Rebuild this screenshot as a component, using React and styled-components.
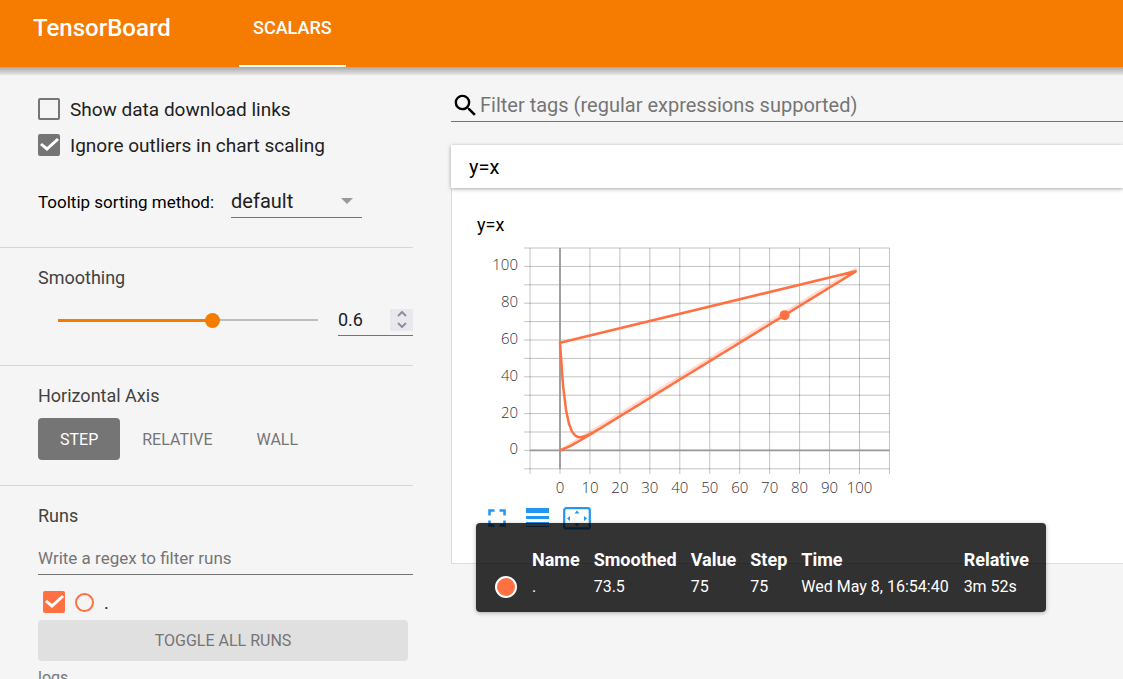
import React, { useState } from 'react';
import styled, { createGlobalStyle } from 'styled-components';
import { MdSearch, MdFullscreen } from 'react-icons/md';

const ORANGE = '#f57c00';
const RUN_COLOR = '#ff7043';

// the run was written twice into the same log dir, so steps go 0-99 and then restart
const points = [...Array(200)].map((_, i) => ({ step: i % 100, value: i % 100 }));

const smooth = (data, weight) => {
  let last = 0;
  return data.map((p, i) => {
    last = last * weight + (1 - weight) * p.value;
    return { step: p.step, value: last / (1 - Math.pow(weight, i + 1)) };
  });
}

const scaleX = (v) => 83 + v * 2.995;
const scaleY = (v) => 207.4 - v * 1.84;
const toPath = (data) => data.map((p) => `${scaleX(p.step).toFixed(2)},${scaleY(p.value).toFixed(2)}`).join(' ');

const range = (from, to, step) => {
  const result = [];
  for (let v = from; v <= to; v += step) result.push(v);
  return result;
}

const LineChart = ({ smoothing }) => {
  const xTicks = range(-10, 110, 10);
  const yTicks = range(-10, 110, 10);
  const hovered = { step: 75, value: 73.5 };

  return (<Chart viewBox="0 0 424 260" role="img" aria-label="y=x">
    <g stroke="#000" strokeOpacity="0.24">
      {xTicks.map((v) => <line key={v} x1={scaleX(v)} x2={scaleX(v)} y1={scaleY(110)} y2="231" />)}
      {yTicks.map((v) => <line key={v} y1={scaleY(v)} y2={scaleY(v)} x1="47" x2={scaleX(110)} />)}
    </g>
    <g stroke="#999" strokeWidth="1.8">
      <line x1={scaleX(0)} x2={scaleX(0)} y1={scaleY(110)} y2={scaleY(-10)} />
      <line x1={scaleX(-10)} x2={scaleX(110)} y1={scaleY(0)} y2={scaleY(0)} />
    </g>
    {range(0, 100, 10).map((v) => <text key={v} x={scaleX(v)} y="250" textAnchor="middle">{v}</text>)}
    {range(0, 100, 20).map((v) => <text key={v} x="41" y={scaleY(v) + 4} textAnchor="end">{v}</text>)}
    <g fill="none" stroke={RUN_COLOR} strokeWidth="2.5">
      <polyline points={toPath(points.slice(0, 100))} strokeOpacity="0.25" />
      <polyline points={toPath(smooth(points, smoothing))} />
    </g>
    <circle cx={scaleX(hovered.step)} cy={scaleY(hovered.value)} r="5" fill={RUN_COLOR} />
  </Chart>)
}

const LinesIcon = () => (
  <svg width="24" height="24" viewBox="0 0 24 24" fill="currentColor" aria-hidden="true">
    <path d="M1 2h23v5H1zM1 10h23v3H1zM1 16h23v2H1zM1 20h23v1H1z" />
  </svg>
)

const FitIcon = () => (
  <svg width="28" height="24" viewBox="0 0 28 24" aria-hidden="true">
    <rect x="1.2" y="2.2" width="25.6" height="20.2" rx="2" fill="none" stroke="currentColor" strokeWidth="2.2" />
    <path fill="currentColor" d="M14 4.5l2.5 3h-5zM14 20.5l2.5-3h-5zM4 12.5l3-2.5v5zM24 12.5l-3-2.5v5z" />
  </svg>
)

export default () => {

  const [smoothing, setSmoothing] = useState(0.6);
  const [axis, setAxis] = useState('step');
  const changeSmoothing = (value) => setSmoothing(Math.min(0.999, Math.max(0, Number(value))));

  return (<Shell>
    <Global />
    <Header>
      <Title>TensorBoard</Title>
      <Nav><Tab href="#scalars">SCALARS</Tab></Nav>
    </Header>
    <Body>
      <Sidebar>
        <Section $pad="24px 0 29px 38px">
          <CheckLabel><Checkbox type="checkbox" />Show data download links</CheckLabel>
          <CheckLabel><Checkbox type="checkbox" defaultChecked />Ignore outliers in chart scaling</CheckLabel>
          <SortRow>
            <label htmlFor="sorting">Tooltip sorting method:</label>
            <SelectBox>
              <select id="sorting" defaultValue="default">
                <option>default</option>
                <option>descending</option>
                <option>ascending</option>
                <option>nearest</option>
              </select>
              <svg width="12" height="6" viewBox="0 0 12 6"><path d="M0 0h12L6 6z" fill="#999" /></svg>
            </SelectBox>
          </SortRow>
        </Section>
        <Section $pad="18px 0 22px 38px">
          <Heading id="smoothing">Smoothing</Heading>
          <SmoothingRow>
            <Slider
              type="range"
              min="0"
              max="1"
              step="0.001"
              aria-labelledby="smoothing"
              value={smoothing}
              onChange={(e) => changeSmoothing(e.target.value)}
              style={{ '--fill': `${smoothing * 100}%` }}
            />
            <NumberBox>
              <input
                type="number"
                step="0.1"
                aria-labelledby="smoothing"
                value={smoothing}
                onChange={(e) => changeSmoothing(e.target.value)}
              />
              <Spinner>
                <button aria-label="Increase" onClick={() => changeSmoothing(smoothing + 0.1)}>
                  <svg width="10" height="6" viewBox="0 0 10 6"><path d="M1 5l4-4 4 4" /></svg>
                </button>
                <button aria-label="Decrease" onClick={() => changeSmoothing(smoothing - 0.1)}>
                  <svg width="10" height="6" viewBox="0 0 10 6"><path d="M1 1l4 4 4-4" /></svg>
                </button>
              </Spinner>
            </NumberBox>
          </SmoothingRow>
        </Section>
        <Section $pad="18px 0 25px 38px">
          <Heading>Horizontal Axis</Heading>
          <AxisRow>
            {['step', 'relative', 'wall'].map((name) => (
              <AxisButton key={name} $active={axis === name} onClick={() => setAxis(name)}>
                {name.toUpperCase()}
              </AxisButton>
            ))}
          </AxisRow>
        </Section>
        <Section $pad="18px 0 0 38px" $last>
          <Heading id="runs">Runs</Heading>
          <RunFilter aria-labelledby="runs" placeholder="Write a regex to filter runs" />
          <RunRow>
            <Checkbox type="checkbox" id="run" defaultChecked $color={RUN_COLOR} />
            <RunDot />
            <label htmlFor="run">.</label>
          </RunRow>
          <ToggleButton>TOGGLE ALL RUNS</ToggleButton>
          <LogDir>logs</LogDir>
        </Section>
      </Sidebar>
      <Main>
        <Search>
          <MdSearch size={29} />
          <input aria-label="Filter tags" placeholder="Filter tags (regular expressions supported)" />
        </Search>
        <CategoryButton>y=x</CategoryButton>
        <Card>
          <CardTitle>y=x</CardTitle>
          <LineChart smoothing={smoothing} />
          <Tools>
            <button aria-label="Toggle full size"><MdFullscreen size={30} /></button>
            <button aria-label="Toggle log scale"><LinesIcon /></button>
            <button aria-label="Fit domain to data"><FitIcon /></button>
          </Tools>
          <Tooltip>
            <table>
              <thead>
                <tr><th /><th>Name</th><th>Smoothed</th><th>Value</th><th>Step</th><th>Time</th><th>Relative</th></tr>
              </thead>
              <tbody>
                <tr>
                  <td><Swatch /></td>
                  <td>.</td>
                  <td>73.5</td>
                  <td>75</td>
                  <td>75</td>
                  <td>Wed May 8, 16:54:40</td>
                  <td>3m 52s</td>
                </tr>
              </tbody>
            </table>
          </Tooltip>
        </Card>
      </Main>
    </Body>
  </Shell>)
}

const Global = createGlobalStyle`
  * {
    box-sizing: border-box;
  }
  body {
    margin: 0;
    background: #f5f5f5;
    color: #212121;
    font-family: Roboto, sans-serif;
    font-size: 18px;
  }
  button, input, select {
    margin: 0;
    padding: 0;
    border: none;
    outline: none;
    background: none;
    color: inherit;
    font: inherit;
  }
  button, select {
    cursor: pointer;
  }
  input::placeholder {
    color: #757575;
    opacity: 1;
  }
`;

const Shell = styled.div`
  display: flex;
  flex-direction: column;
  height: 100vh;
  overflow: hidden;
`;

const Header = styled.header`
  display: flex;
  flex: none;
  height: 67px;
  padding-left: 33px;
  background: ${ORANGE};
  color: #fff;
`;

const Title = styled.h1`
  width: 206px;
  margin: 0;
  font-size: 24px;
  font-weight: 500;
  line-height: 56px;
`;

const Nav = styled.nav`
  display: flex;
`;

const Tab = styled.a`
  padding: 0 14px;
  border-bottom: 2px solid #fff;
  color: #fff;
  font-weight: 500;
  line-height: 56px;
  text-decoration: none;
`;

const Body = styled.div`
  display: flex;
  flex: 1;
  gap: 38px;
  min-height: 0;
  background: linear-gradient(#a8a8a8, #e6e6e6) top / 100% 8px no-repeat;
`;

const Sidebar = styled.aside`
  flex: none;
  width: 413px;
`;

const Section = styled.section`
  padding: ${(props) => props.$pad};
  border-bottom: ${(props) => props.$last ? 'none' : '1px solid #d6d6d6'};
`;

const Heading = styled.h3`
  margin: 0;
  color: #424242;
  font-size: 18px;
  font-weight: 400;
  line-height: 24px;
`;

const CheckLabel = styled.label`
  display: flex;
  align-items: center;
  gap: 10px;
  height: 36px;
  font-size: 19px;
`;

const Checkbox = styled.input`
  appearance: none;
  flex: none;
  width: 22px;
  height: 22px;
  border: 2px solid #757575;
  border-radius: 2px;

  &:checked {
    border: none;
    background: ${(props) => props.$color || '#757575'};
  }
  &:checked::before {
    content: '';
    display: block;
    height: 22px;
    background: #fff;
    clip-path: polygon(4px 9px, 9px 13px, 19px 4px, 21px 6px, 9px 17px, 2px 11px);
  }
`;

const SortRow = styled.div`
  display: flex;
  align-items: center;
  gap: 17px;
  height: 32px;
  margin-top: 23px;
  color: #000;
  font-size: 17px;
`;

const SelectBox = styled.div`
  display: grid;
  align-items: center;
  width: 131px;
  height: 32px;
  padding-bottom: 2px;
  border-bottom: 1px solid #757575;
  color: #212121;

  select, svg {
    grid-area: 1 / 1;
  }
  select {
    appearance: none;
    font-size: 20px;
  }
  svg {
    justify-self: end;
    margin-right: 9px;
    pointer-events: none;
  }
`;

const SmoothingRow = styled.div`
  display: flex;
  align-items: center;
  justify-content: space-between;
  height: 46px;
  margin-top: 7px;
  padding-left: 20px;
`;

const Slider = styled.input`
  appearance: none;
  width: 260px;
  height: 15px;
  background:
    linear-gradient(${ORANGE}, ${ORANGE}) left center / var(--fill) 3px no-repeat,
    linear-gradient(#bdbdbd, #bdbdbd) center / 100% 2px no-repeat;

  &::-webkit-slider-thumb {
    appearance: none;
    width: 15px;
    height: 15px;
    border-radius: 50%;
    background: ${ORANGE};
  }
`;

const NumberBox = styled.div`
  display: flex;
  align-items: center;
  width: 75px;
  height: 31px;
  border-bottom: 1px solid #757575;

  input {
    appearance: textfield;
    flex: 1;
    min-width: 0;
  }
`;

const Spinner = styled.div`
  display: flex;
  flex-direction: column;
  width: 23px;
  height: 22px;
  background: #e9e9ed;

  button {
    display: grid;
    flex: 1;
    place-items: center;
  }
  svg {
    fill: none;
    stroke: #8f8f9d;
    stroke-width: 2;
  }
`;

const AxisRow = styled.div`
  display: flex;
  margin-top: 10px;
`;

const AxisButton = styled.button`
  height: 42px;
  padding: 0 22px;
  border-radius: 4px;
  background: ${(props) => props.$active ? '#757575' : 'none'};
  color: ${(props) => props.$active ? '#fff' : '#757575'};
  font-size: 16px;
`;

const RunFilter = styled.input`
  display: block;
  width: 100%;
  height: 34px;
  margin-top: 13px;
  border-bottom: 1px solid #757575;
  font-size: 17px;
`;

const RunRow = styled.div`
  display: flex;
  align-items: center;
  gap: 10px;
  height: 45px;
  padding: 9px 5px 0;
`;

const RunDot = styled.span`
  width: 19px;
  height: 19px;
  border: 2px solid ${RUN_COLOR};
  border-radius: 50%;
`;

const ToggleButton = styled.button`
  display: block;
  width: 370px;
  height: 41px;
  border-radius: 4px;
  background: #e0e0e0;
  color: #757575;
  font-size: 16px;
`;

const LogDir = styled.div`
  margin-top: 5px;
  color: #757575;
  font-size: 16px;
  line-height: 24px;
`;

const Main = styled.main`
  flex: 1;
  min-width: 0;
  padding-top: 22px;
`;

const Search = styled.div`
  display: flex;
  align-items: center;
  height: 33px;
  border-bottom: 1px solid #757575;
  color: #000;
  font-size: 20px;

  input {
    flex: 1;
  }
`;

const CategoryButton = styled.button`
  display: block;
  position: relative;
  z-index: 1;
  width: 100%;
  height: 43px;
  margin-top: 23px;
  padding-left: 18px;
  background: #fff;
  box-shadow: 0 1px 4px rgba(0, 0, 0, 0.35);
  color: #000;
  font-size: 20px;
  text-align: left;
`;

const Card = styled.section`
  position: relative;
  height: 376px;
  padding: 25px 0 0 25px;
  border: 1px solid #ddd;
  border-width: 0 0 1px 1px;
  background: #fff;
`;

const CardTitle = styled.h4`
  margin: 0;
  color: #000;
  font-size: 18px;
  font-weight: 400;
  line-height: 24px;
`;

const Chart = styled.svg`
  display: block;
  width: 424px;
  height: 260px;
  margin-top: 6px;

  text {
    fill: #32313f;
    font-family: 'Open Sans', sans-serif;
    font-size: 15px;
    font-weight: 300;
  }
`;

const Tools = styled.div`
  display: flex;
  color: #2196f3;

  button {
    display: grid;
    place-items: center;
    width: 40px;
    height: 30px;
  }
`;

const Tooltip = styled.div`
  position: absolute;
  top: 335px;
  left: 24px;
  padding: 23px 17px 12px 19px;
  border-radius: 4px;
  background: rgba(0, 0, 0, 0.8);
  box-shadow: 0 1px 4px rgba(0, 0, 0, 0.3);
  color: #fff;
  font-size: 16px;
  line-height: 27px;
  white-space: nowrap;

  table {
    border-collapse: collapse;
  }
  th, td {
    padding: 0 15px 0 0;
    text-align: left;
  }
  th {
    padding-right: 14px;
    font-size: 18px;
    font-weight: 700;
  }
  th:last-child, td:last-child {
    padding: 0;
  }
`;

const Swatch = styled.span`
  display: block;
  width: 22px;
  height: 22px;
  border: 2px solid #fff;
  border-radius: 50%;
  background: ${RUN_COLOR};
`;
